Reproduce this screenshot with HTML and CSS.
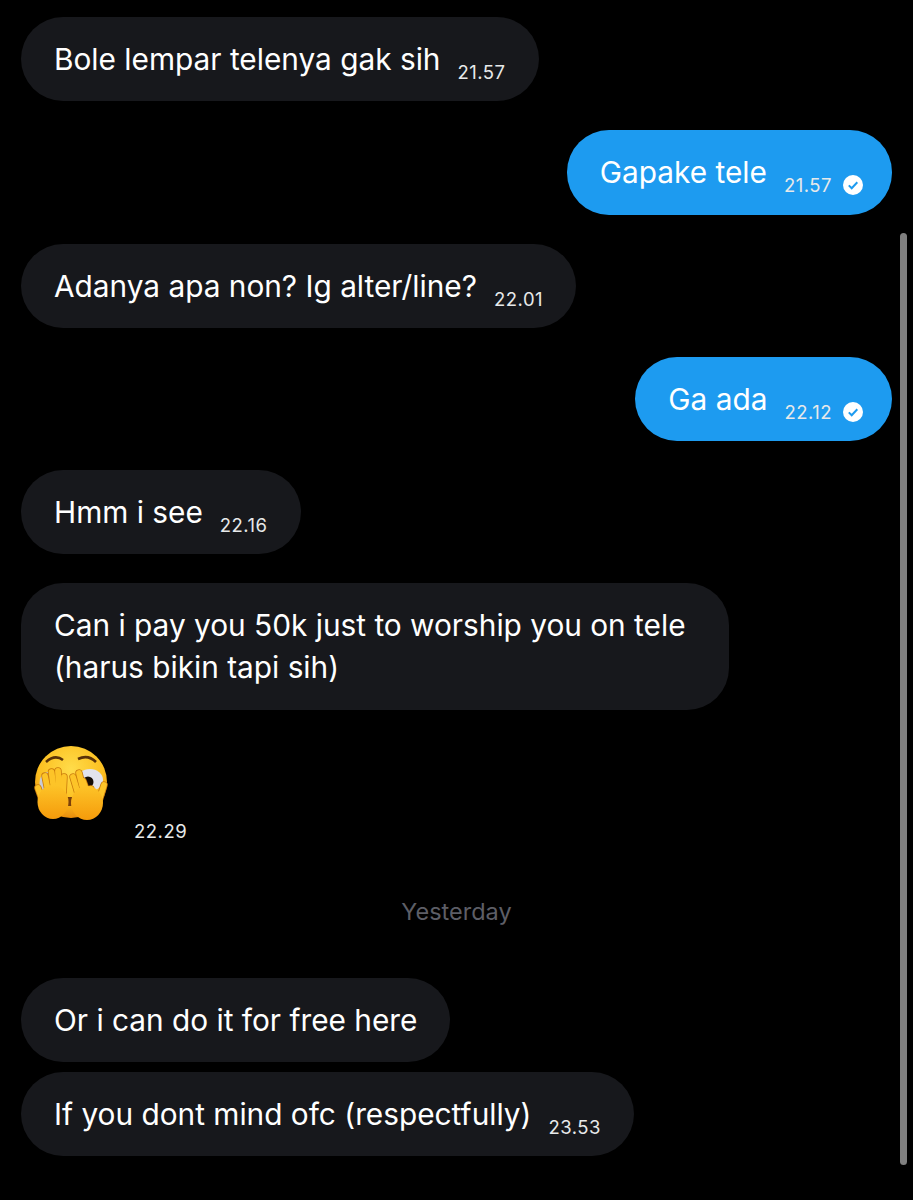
FILE: index.html
```html
<!DOCTYPE html>
<html lang="en">

<head>
    <meta charset="UTF-8">
    <meta name="viewport" content="width=device-width, initial-scale=1.0">
    <title>Chat</title>
    <link rel="stylesheet" href="styles.css">
</head>

<body>
    <div class="scrollbar"></div>
    <div class="chat">
        <div class="msg">
            <span class="text">Bole lempar telenya gak sih</span>
            <span class="time">21.57</span>
        </div>
        <div class="msg me">
            <span class="text">Gapake tele</span>
            <span class="time">21.57</span>
            <svg class="check" viewBox="0 0 20 20">
                <circle cx="10" cy="10" r="10" fill="#fff" />
                <path d="M5.8 10.4l2.9 2.9 5.6-6" fill="none" stroke="#1d9bf0" stroke-width="2" />
            </svg>
        </div>
        <div class="msg">
            <span class="text">Adanya apa non? Ig alter/line?</span>
            <span class="time">22.01</span>
        </div>
        <div class="msg me">
            <span class="text">Ga ada</span>
            <span class="time">22.12</span>
            <svg class="check" viewBox="0 0 20 20">
                <circle cx="10" cy="10" r="10" fill="#fff" />
                <path d="M5.8 10.4l2.9 2.9 5.6-6" fill="none" stroke="#1d9bf0" stroke-width="2" />
            </svg>
        </div>
        <div class="msg">
            <span class="text">Hmm i see</span>
            <span class="time">22.16</span>
        </div>
        <div class="msg long">
            <span class="text">Can i pay you 50k just to worship you on tele<br>(harus bikin tapi sih)</span>
        </div>
        <div class="emoji-row">
            <svg class="emoji" viewBox="0 0 76 76">
                <defs>
                    <radialGradient id="face" cx="50%" cy="32%" r="68%">
                        <stop offset="0" stop-color="#ffdc4a" />
                        <stop offset="0.65" stop-color="#fcc021" />
                        <stop offset="1" stop-color="#e88c0c" />
                    </radialGradient>
                    <linearGradient id="hand" x1="0" y1="0" x2="0" y2="1">
                        <stop offset="0" stop-color="#fdc428" />
                        <stop offset="1" stop-color="#f59b0b" />
                    </linearGradient>
                    <g id="fingers">
                        <path d="M5 43l5 14" />
                        <path d="M12 31l4 20" />
                        <path d="M18.500 27l3 22" />
                        <path d="M25 26l1 22" />
                        <path d="M31 32l-1 18" />
                        <path d="M40 32l6 20" />
                        <path d="M46 28l5 20" />
                        <path d="M50 36l5 14" />
                        <path d="M58 44l2 10" />
                        <path d="M71 40l-5 16" />
                    </g>
                </defs>
                <circle cx="38" cy="37" r="36" fill="url(#face)" />
                <path d="M13 17q9-8 17-2" fill="none" stroke="#5a3208" stroke-width="2.6" />
                <path d="M45 14q10-5 18 3" fill="none" stroke="#5a3208" stroke-width="2.6" />
                <ellipse cx="14" cy="38" rx="7.500" ry="11" fill="#c9cbd6" />
                <ellipse cx="57" cy="35" rx="13" ry="11" fill="#e2e3ec" />
                <circle cx="55" cy="37" r="5.500" fill="#150d06" />
                <path d="M33 52h9l-2 9h-5z" fill="#7a3f0a" />
                <use href="#fingers" fill="none" stroke="#c97a0c" stroke-width="7.400" stroke-linecap="round" />
                <use href="#fingers" fill="none" stroke="#fdc428" stroke-width="5.800" stroke-linecap="round" />
                <ellipse cx="20" cy="57" rx="15.500" ry="17" fill="url(#hand)" />
                <ellipse cx="54" cy="58" rx="16" ry="17" fill="url(#hand)" />
            </svg>
            <span class="time">22.29</span>
        </div>
        <div class="day">Yesterday</div>
        <div class="msg">
            <span class="text">Or i can do it for free here</span>
        </div>
        <div class="msg next">
            <span class="text">If you dont mind ofc (respectfully)</span>
            <span class="time">23.53</span>
        </div>
    </div>
</body>

</html>
```

FILE: styles.css
```css
* {
    box-sizing: border-box;
}

body {
    margin: 0;
    height: 1200px;
    overflow: hidden;
    background-color: #000;
    color: #fff;
    font-family: Inter, "Liberation Sans", sans-serif;
}

.chat {
    display: flex;
    flex-direction: column;
    align-items: flex-start;
    gap: 29px;
    padding: 17px 21px 0;
}

.msg {
    display: flex;
    align-items: flex-end;
    min-height: 84.3px;
    padding: 21px 33px 21.3px 34px;
    border-radius: 42px;
    background-color: #17181c;
}

.me {
    align-self: flex-end;
    padding-left: 34px;
    padding-right: 29px;
    background-color: #1d9bf0;
}

.long {
    width: 708px;
}

.next {
    margin-top: -19px;
}

.text {
    margin-left: -1px;
    font-size: 29.8px;
    line-height: 42px;
}

.time {
    margin-left: 17px;
    margin-bottom: -3px;
    font-size: 18.5px;
    letter-spacing: 0.5px;
    line-height: 22px;
    color: #e7e9ea;
}

.check {
    width: 20px;
    height: 20px;
    margin-left: 11px;
    margin-bottom: -2px;
}

.emoji-row {
    display: flex;
    align-items: flex-end;
    height: 98px;
    margin-top: 5px;
    padding-left: 12px;
}

.emoji {
    width: 76px;
    height: 76px;
    margin-bottom: 21px;
}

.emoji-row .time {
    margin-left: 25px;
    margin-bottom: 0;
}

.day {
    align-self: center;
    margin-top: 27px;
    margin-bottom: 23px;
    font-size: 23.5px;
    line-height: 28px;
    color: #5d5e66;
}

.scrollbar {
    position: absolute;
    top: 233px;
    left: 900px;
    width: 7px;
    height: 932px;
    border-radius: 4px;
    background-color: #808080;
}
```
